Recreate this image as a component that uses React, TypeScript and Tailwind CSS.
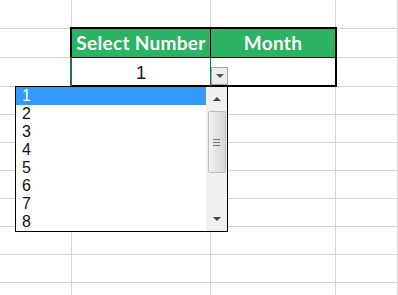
import React from 'react';

const font = { fontFamily: '"Lato", "Open Sans", "Liberation Sans", sans-serif' };

// Row heights include the 1px gridline at the bottom
const rows = [29, 29, 29, 28, 28, 28, 28, 28, 28, 28, 28];
const cols = ['w-[72px]', 'w-[139px]', 'w-[125px]', 'flex-1'];

function Cell({ row, col }: { row: number; col: number }) {
  const isHeader = row === 1 && (col === 1 || col === 2);
  const isData = row === 2 && col === 1;
  let cls = `${cols[col]} h-full border-r border-b border-[#d4d4d4] flex items-center justify-center`;
  if (isHeader) {
    cls = `${cols[col]} h-full bg-[#2bb262] border-b border-b-black ${col === 1 ? 'border-r border-r-black' : 'border-r border-r-[#d4d4d4]'} flex items-center justify-center text-white font-bold text-[19px] tracking-[0.3px]`;
  }
  return (
    <div className={cls} style={font}>
      {isHeader && col === 1 && <span className="mt-[1px]">Select Number</span>}
      {isHeader && col === 2 && <span className="mt-[1px]">Month</span>}
      {isData && <span className="text-[19px] text-[#1c1c4a] mt-[2px]" style={{ fontFamily: '"Liberation Sans", sans-serif' }}>1</span>}
    </div>
  );
}

export default function App() {
  return (
    <div className="relative w-[398px] h-[295px] overflow-hidden bg-white">
      {/* Sheet grid */}
      {rows.map((h, r) => (
        <div key={r} className="flex" style={{ height: h }}>
          {cols.map((_, c) => (
            <Cell key={c} row={r} col={c} />
          ))}
        </div>
      ))}

      {/* Table outline */}
      <div className="absolute left-[70px] top-[27px] w-[267px] h-[60px] border-2 border-black pointer-events-none" />

      {/* Active cell edges */}
      <div className="absolute left-[70px] top-[57px] w-[2px] h-[29px] bg-[#217346]" />
      <div className="absolute left-[210px] top-[57px] w-[1px] h-[29px] bg-[#217346]" />

      {/* Dropdown button */}
      <div className="absolute left-[211px] top-[67px] w-[17px] h-[18px] bg-[#ececec] border border-[#a6a6a6] flex items-center justify-center">
        <div className="w-0 h-0 border-l-[4px] border-r-[4px] border-t-[4px] border-l-transparent border-r-transparent border-t-[#555]" />
      </div>

      {/* List box */}
      <div className="absolute left-[15px] top-[86px] w-[213px] h-[146px] bg-white border border-black flex">
        <div className="flex-1 flex flex-col" style={{ fontFamily: '"Liberation Sans", sans-serif' }}>
          {[1, 2, 3, 4, 5, 6, 7, 8].map((n) => (
            <div
              key={n}
              className={`h-[18px] pl-[6px] text-[16px] leading-[18px] ${n === 1 ? 'bg-[#3399ff] text-white' : 'text-[#111]'}`}
            >
              {n}
            </div>
          ))}
        </div>
        <div className="w-[21px] h-full bg-[#f0f0f0] flex flex-col items-center">
          <div className="h-[24px] flex items-center justify-center">
            <div className="w-0 h-0 border-l-[4px] border-r-[4px] border-b-[4px] border-l-transparent border-r-transparent border-b-[#444]" />
          </div>
          <div className="w-[18px] h-[62px] rounded-[2px] border border-[#bcbcbc] bg-gradient-to-r from-[#f4f4f4] via-[#e2e2e2] to-[#d8d8d8] flex flex-col items-center justify-center gap-[2px]">
            <div className="w-[7px] h-[1px] bg-[#777]" />
            <div className="w-[7px] h-[1px] bg-[#777]" />
            <div className="w-[7px] h-[1px] bg-[#777]" />
          </div>
          <div className="flex-1" />
          <div className="h-[24px] flex items-center justify-center">
            <div className="w-0 h-0 border-l-[4px] border-r-[4px] border-t-[4px] border-l-transparent border-r-transparent border-t-[#444]" />
          </div>
        </div>
      </div>
    </div>
  );
}
